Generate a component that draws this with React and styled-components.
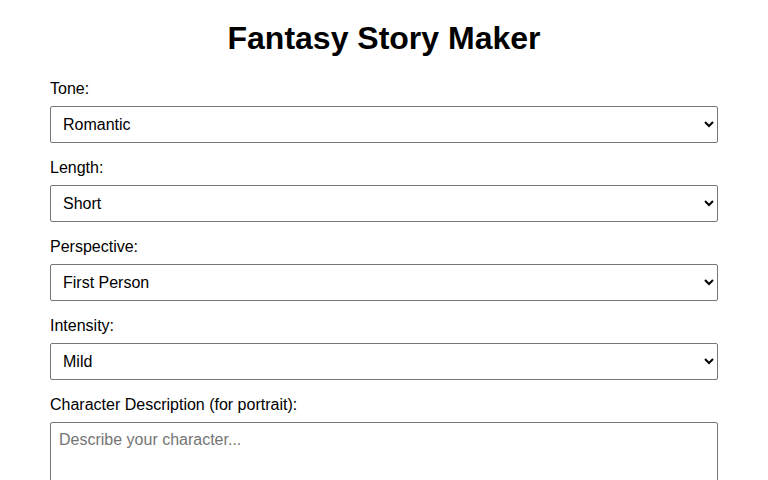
import React from "react";
import styled, { createGlobalStyle } from "styled-components";

const GlobalStyle = createGlobalStyle`
  body {
    margin: 0;
    background: #ffffff;
    font-family: "Liberation Sans", Arial, sans-serif;
    color: #000;
  }
`;

const Page = styled.div`
  padding: 0 50px;
`;

const Title = styled.h1`
  font-size: 32px;
  font-weight: bold;
  text-align: center;
  margin: 20px 0 22px;
`;

const Field = styled.div`
  display: flex;
  flex-direction: column;
  margin-bottom: 15px;
`;

const Label = styled.label`
  font-size: 16px;
  line-height: 18px;
  padding-top: 1px;
  margin-bottom: 8px;
`;

const Select = styled.select`
  box-sizing: border-box;
  width: 100%;
  height: 37px;
  padding: 0 8px;
  font-family: "Liberation Sans", Arial, sans-serif;
  font-size: 16px;
  color: #000;
  background: #fff;
  border: 1px solid #767676;
  border-radius: 2px;
`;

const TextArea = styled.textarea`
  box-sizing: border-box;
  width: 100%;
  height: 100px;
  padding: 8px;
  font-family: "Liberation Sans", Arial, sans-serif;
  font-size: 16px;
  border: 1px solid #767676;
  border-radius: 2px;
  resize: vertical;
`;

const fields = [
  { label: "Tone:", options: ["Romantic", "Dark", "Whimsical", "Epic"] },
  { label: "Length:", options: ["Short", "Medium", "Long"] },
  { label: "Perspective:", options: ["First Person", "Second Person", "Third Person"] },
  { label: "Intensity:", options: ["Mild", "Moderate", "Intense"] },
];

function App() {
  return (
    <>
      <GlobalStyle />
      <Page>
        <Title>Fantasy Story Maker</Title>
        {fields.map((field) => (
          <Field key={field.label}>
            <Label>{field.label}</Label>
            <Select defaultValue={field.options[0]}>
              {field.options.map((o) => (
                <option key={o}>{o}</option>
              ))}
            </Select>
          </Field>
        ))}
        <Field>
          <Label>Character Description (for portrait):</Label>
          <TextArea placeholder="Describe your character..." />
        </Field>
      </Page>
    </>
  );
}

export default App;
